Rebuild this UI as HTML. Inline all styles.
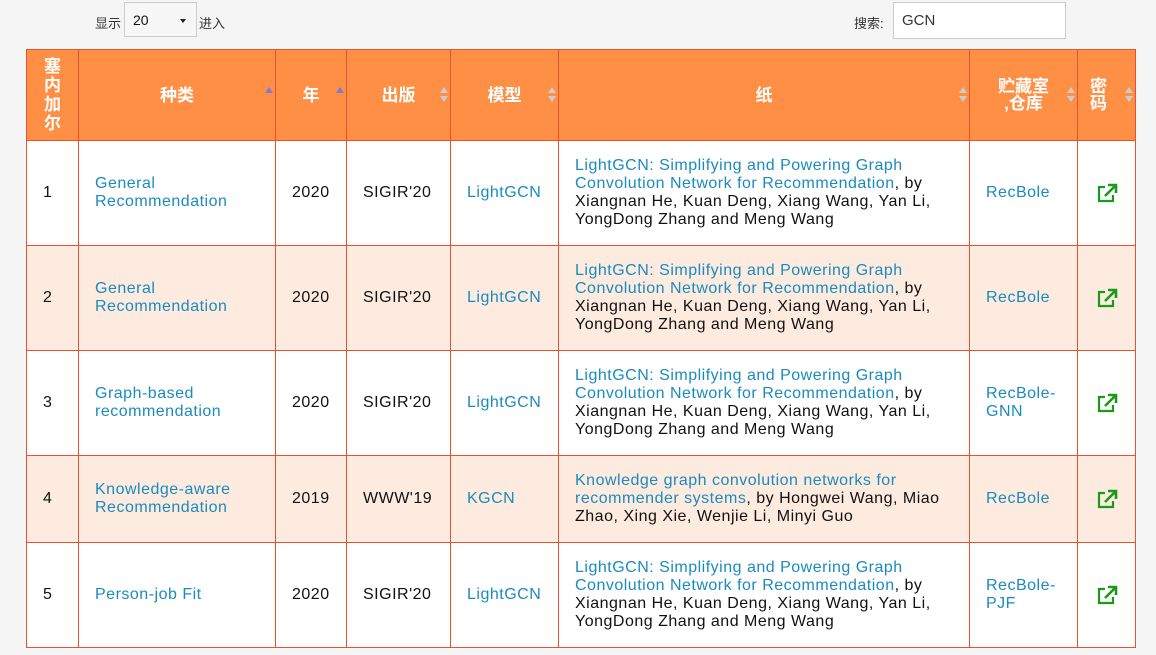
<!DOCTYPE html>
<html><head><meta charset="utf-8"><style>
body{margin:0;background:#f5f5f5;font-family:"Liberation Sans","Noto Sans CJK SC",sans-serif;width:1156px;height:655px;overflow:hidden;position:relative;color:#111}
.top{position:absolute;font-size:13px;color:#333}
.sel{position:absolute;left:124px;top:2px;width:73px;height:35px;border:1px solid #ccc;background:#f7f7f7;box-sizing:border-box;font-size:14px;padding:9px 8px}
.sel:after{content:"";position:absolute;right:10px;top:16px;border:3px solid transparent;border-top:4px solid #222}
.inp{position:absolute;left:893px;top:2px;width:173px;height:37px;border:1px solid #ccc;background:#fff;box-sizing:border-box;font-size:15px;padding:9px 8px;color:#333}
table{position:absolute;left:26px;top:49px;border-collapse:collapse;table-layout:fixed;width:1110px}
td,th{border:1px solid #e8532f;padding:0 16px;font-size:16px;line-height:18px;vertical-align:middle;position:relative}
td{letter-spacing:.5px}
th{background:#ff8f45;color:#fff;font-weight:bold;height:90px;font-size:17px;text-align:center;padding:0 6px;line-height:19px}
tr.r{height:105px}tr.s{height:87px}
tr.a td{background:#fdebdf}
td{background:#fff}
a{color:#1a8bbf;text-decoration:none}
.ar{position:absolute;right:6px;top:38px;width:0;height:0}
.ar:before{content:"";position:absolute;left:-4px;top:-1px;border:4px solid transparent;border-bottom:6px solid #ccc;border-top:0}
.ar:after{content:"";position:absolute;left:-4px;top:8px;border:4px solid transparent;border-top:6px solid #ccc;border-bottom:0}
.up:before{border-bottom-color:#7a7ad8}.up:after{display:none}
svg{display:block;margin:0 auto}
</style></head><body>
<div class="top" style="left:95px;top:13px">显示</div>
<div class="sel">20</div>
<div class="top" style="left:199px;top:13px">进入</div>
<div class="top" style="left:854px;top:13px">搜索:</div>
<div class="inp">GCN</div>
<table>
<colgroup><col style="width:52px"><col style="width:197px"><col style="width:71px"><col style="width:104px"><col style="width:108px"><col style="width:411px"><col style="width:108px"><col style="width:58px"></colgroup>
<tr><th style="line-height:19px">塞<br>内<br>加<br>尔</th><th>种类<span class="ar up"></span></th><th>年<span class="ar up"></span></th><th>出版<span class="ar"></span></th><th>模型<span class="ar"></span></th><th>纸<span class="ar"></span></th><th style="line-height:17px">贮藏室<br>,仓库<span class="ar"></span></th><th style="line-height:17px;text-align:left;padding-left:12px">密<br>码<span class="ar"></span></th></tr>
<tr class="r"><td>1</td><td><a>General<br>Recommendation</a></td><td>2020</td><td>SIGIR'20</td><td><a>LightGCN</a></td><td><a>LightGCN: Simplifying and Powering Graph<br>Convolution Network for Recommendation</a>, by<br>Xiangnan He, Kuan Deng, Xiang Wang, Yan Li,<br>YongDong Zhang and Meng Wang</td><td><a>RecBole</a></td><td><svg width="22" height="20" viewBox="0 0 22 20"><path d="M9 4H3v14h14v-6" fill="none" stroke="#1a9a1a" stroke-width="2.2"/><path d="M9 13L19 3M12 2h8v8" fill="none" stroke="#1a9a1a" stroke-width="2.6"/></svg></td></tr>
<tr class="r a"><td>2</td><td><a>General<br>Recommendation</a></td><td>2020</td><td>SIGIR'20</td><td><a>LightGCN</a></td><td><a>LightGCN: Simplifying and Powering Graph<br>Convolution Network for Recommendation</a>, by<br>Xiangnan He, Kuan Deng, Xiang Wang, Yan Li,<br>YongDong Zhang and Meng Wang</td><td><a>RecBole</a></td><td><svg width="22" height="20" viewBox="0 0 22 20"><path d="M9 4H3v14h14v-6" fill="none" stroke="#1a9a1a" stroke-width="2.2"/><path d="M9 13L19 3M12 2h8v8" fill="none" stroke="#1a9a1a" stroke-width="2.6"/></svg></td></tr>
<tr class="r"><td>3</td><td><a>Graph-based<br>recommendation</a></td><td>2020</td><td>SIGIR'20</td><td><a>LightGCN</a></td><td><a>LightGCN: Simplifying and Powering Graph<br>Convolution Network for Recommendation</a>, by<br>Xiangnan He, Kuan Deng, Xiang Wang, Yan Li,<br>YongDong Zhang and Meng Wang</td><td><a>RecBole-<br>GNN</a></td><td><svg width="22" height="20" viewBox="0 0 22 20"><path d="M9 4H3v14h14v-6" fill="none" stroke="#1a9a1a" stroke-width="2.2"/><path d="M9 13L19 3M12 2h8v8" fill="none" stroke="#1a9a1a" stroke-width="2.6"/></svg></td></tr>
<tr class="s a"><td>4</td><td><a>Knowledge-aware<br>Recommendation</a></td><td>2019</td><td>WWW'19</td><td><a>KGCN</a></td><td><a>Knowledge graph convolution networks for<br>recommender systems</a>, by Hongwei Wang, Miao<br>Zhao, Xing Xie, Wenjie Li, Minyi Guo</td><td><a>RecBole</a></td><td><svg width="22" height="20" viewBox="0 0 22 20"><path d="M9 4H3v14h14v-6" fill="none" stroke="#1a9a1a" stroke-width="2.2"/><path d="M9 13L19 3M12 2h8v8" fill="none" stroke="#1a9a1a" stroke-width="2.6"/></svg></td></tr>
<tr class="r"><td>5</td><td><a>Person-job Fit</a></td><td>2020</td><td>SIGIR'20</td><td><a>LightGCN</a></td><td><a>LightGCN: Simplifying and Powering Graph<br>Convolution Network for Recommendation</a>, by<br>Xiangnan He, Kuan Deng, Xiang Wang, Yan Li,<br>YongDong Zhang and Meng Wang</td><td><a>RecBole-<br>PJF</a></td><td><svg width="22" height="20" viewBox="0 0 22 20"><path d="M9 4H3v14h14v-6" fill="none" stroke="#1a9a1a" stroke-width="2.2"/><path d="M9 13L19 3M12 2h8v8" fill="none" stroke="#1a9a1a" stroke-width="2.6"/></svg></td></tr>
</table>
</body></html>
